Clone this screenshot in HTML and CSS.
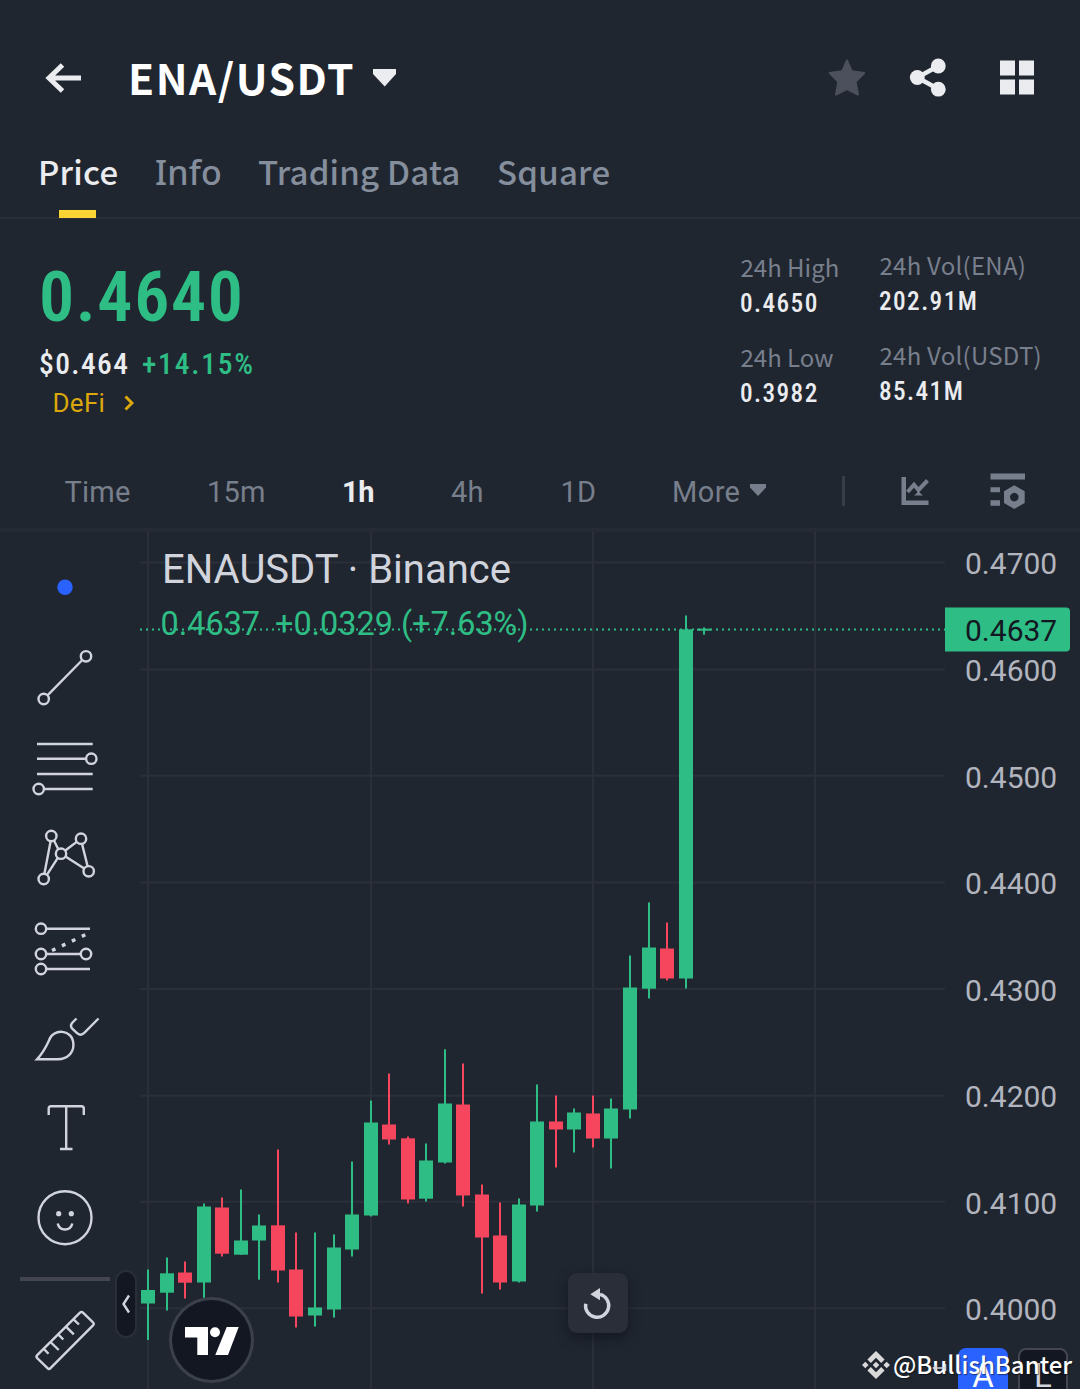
FILE: index.html
```html
<!DOCTYPE html>
<html lang="en">
<head>
<meta charset="utf-8">
<title>ENA/USDT</title>
<link rel="stylesheet" href="styles.css">
</head>
<body>
<header class="titlebar">
  <svg class="back" width="40" height="32" viewBox="0 0 40 32"><path d="M37 16H5M18.500 3 5 16 18.500 29" /></svg>
  <h1 class="pair">ENA/USDT</h1>
  <svg class="pair-caret" width="24" height="20" viewBox="0 0 24 20"><path d="M0 1H23V6L11.700 18.500 0 6Z"/></svg>
  <div class="actions">
    <svg width="38" height="40" viewBox="0 0 38 40"><path class="star" d="M19 2.500 23.800 13.300 36.200 15 27.500 23.800 30 36.500 19 31.200 8 36.500 10.300 23.800 1.700 15 14.200 13.300Z"/></svg>
    <svg width="38" height="40" viewBox="0 0 38 40"><path class="share-line" d="M29.300 8 8.300 19.500 29.300 31"/><circle cx="29.300" cy="8" r="7.400"/><circle cx="8.300" cy="19.500" r="7.400"/><circle cx="29.300" cy="31.200" r="7.400"/></svg>
    <svg width="36" height="40" viewBox="0 0 36 40"><path d="M1 2.500h15v15h-15zM20 2.500h15v15h-15zM1 21.500h15v15h-15zM20 21.500h15v15h-15z"/></svg>
  </div>
</header>
<nav class="tabs">
  <a class="tab active">Price</a>
  <a class="tab info">Info</a>
  <a class="tab data">Trading Data</a>
  <a class="tab square">Square</a>
</nav>
<section class="summary">
  <div class="quote">
    <div class="last">0.4640</div>
    <div class="change"><span class="usd">$0.464</span><span class="pct">+14.15%</span></div>
    <div class="tag">DeFi<svg width="10" height="16" viewBox="0 0 10 16"><path d="M1.500 1.500 8 8 1.500 14.500"/></svg></div>
  </div>
  <div class="stats high-low">
    <div class="stat"><span class="label">24h High</span><span class="value">0.4650</span></div>
    <div class="stat"><span class="label">24h Low</span><span class="value">0.3982</span></div>
  </div>
  <div class="stats volume">
    <div class="stat"><span class="label">24h Vol(ENA)</span><span class="value">202.91M</span></div>
    <div class="stat"><span class="label">24h Vol(USDT)</span><span class="value">85.41M</span></div>
  </div>
</section>
<nav class="intervals">
  <span>Time</span><span>15m</span><span class="on">1h</span><span>4h</span><span>1D</span>
  <span>More<svg class="more-caret" width="16" height="14" viewBox="0 0 16 14"><path d="M0 1H16V4.500L8 13 0 4.500Z"/></svg></span>
  <i class="sep"></i>
  <svg width="30" height="30" viewBox="0 0 30 30"><path d="M.5 1H5V24.500H27.500V29H.500Z"/><path class="zig" d="M6.500 16 13 8.700 17.500 14 26.500 4.500"/><path d="M17 13l2 4 3 2.500h-9l3-2.500z"/></svg>
  <svg width="36" height="36" viewBox="0 0 36 36"><path fill-rule="evenodd" d="M.5.500H35V6.500H.500ZM.5 14.200H10V19.200H.500ZM.5 27.200H10V32.700H.500ZM24.300 12.300 34.700 18.200V30L24.300 35.900 14 30V18.200ZM24.300 19.800a4.300 4.300 0 1 0 .01 0Z"/></svg>
</nav>
<main class="workspace">
  <aside class="tools">
    <svg viewBox="0 0 130 90"><circle class="dot" cx="65" cy="45.300" r="7.700"/></svg>
    <svg viewBox="0 0 130 90"><path d="M47.500 63.300 82.300 28"/><circle cx="86" cy="24.300" r="5.200"/><circle cx="43.700" cy="67" r="5.200"/></svg>
    <svg viewBox="0 0 130 90"><path d="M37 22H92.700M37 36.700H86M37 52H92.700M44 67H92.700"/><circle cx="91.300" cy="36.700" r="5.200"/><circle cx="38.700" cy="67" r="5.200"/></svg>
    <svg viewBox="0 0 130 90"><path d="M50.600 29.300 44.400 61.800M54 28.500 58.300 37.200M57.800 45.800 46.900 62.900M65.300 38.500 76.700 29.900M82 31.800 87.600 54.200M65.500 44.500 84.200 56.600"/><circle cx="51.300" cy="24" r="5.200"/><circle cx="81" cy="26.700" r="5.200"/><circle cx="61" cy="41.700" r="5.200"/><circle cx="88.700" cy="59.300" r="5.200"/><circle cx="43.700" cy="67" r="5.200"/></svg>
    <svg viewBox="0 0 130 90"><path d="M46.200 26.700H90M46.200 52H81M46.200 67H90"/><path class="dots" d="M52 48.500 88 31.500"/><circle cx="41" cy="26.700" r="5.200"/><circle cx="41" cy="52" r="5.200"/><circle cx="86" cy="52" r="5.200"/><circle cx="41" cy="67" r="5.200"/></svg>
    <svg viewBox="0 0 130 90"><path d="M37 67.300C43 61 46 55 49 48.500 52 36.500 73.400 36 73.400 53 73.400 61 67 67.300 58 67.300Z"/><path d="M76.500 26.500 72.500 30.500Q69.500 33.700 72.500 37L76.500 40.700Q80.500 44.700 84.500 40.700L98.500 26.500"/></svg>
    <svg viewBox="0 0 130 90"><path d="M48.700 33V26.500Q48.700 24.200 51 24.200H81.500Q83.800 24.200 83.800 26.500V33M66.200 24.200V67M60 67H72.500"/></svg>
    <svg viewBox="0 0 130 90"><circle cx="65" cy="45.700" r="26.500"/><path d="M57.700 51.500C59.500 59.500 70.500 59.500 72.300 51.500"/><circle class="eye" cx="58.700" cy="41.700" r="2.600"/><circle class="eye" cx="71.300" cy="41.700" r="2.600"/></svg>
    <hr>
    <svg viewBox="0 0 130 90"><path d="M80 16.700Q81.500 15.200 83 16.700L93 26.300Q94.500 27.800 93 29.300L50.500 72.200Q49 73.700 47.500 72.200L37.200 62.200Q35.700 60.700 37.200 59.200ZM43.700 52.700 48.500 57.800M50.500 46 58.700 54M58.200 38.400 63.300 43.500M66 30.700 73.800 38.300M73.500 23.300 79 28.500"/></svg>
    <button class="collapse"><svg width="10" height="20" viewBox="0 0 10 20"><path d="M8 1.500 2.500 10 8 18.500"/></svg></button>
  </aside>
  <div class="chart">
    <svg class="plot" width="940" height="857" viewBox="140 532 940 857">
      <path class="grid" d="M148 528V1389M371 528V1389M593 528V1389M815 528V1389M140 562.500H945M140 669.500H945M140 775.700H945M140 882.500H945M140 989H945M140 1095.700H945M140 1201.700H945M140 1308.300H945"/>
      <path class="last-line" d="M140 629.500H945"/>
      <g id="candles"></g>
      <text class="symbol" x="162" y="582.700">ENAUSDT · Binance</text>
      <text class="delta" x="160.500" y="634.500">0.4637</text>
      <text class="delta" x="275" y="634.500">+0.0329 (+7.63%)</text>
      <path class="badge" d="M945 607.500H1066Q1070 607.500 1070 611.500V647.500Q1070 651.500 1066 651.500H945Z"/>
      <g class="axis">
        <text x="965" y="573.700">0.4700</text>
        <text class="current" x="965" y="640.700">0.4637</text>
        <text x="965" y="680.700">0.4600</text>
        <text x="965" y="787.500">0.4500</text>
        <text x="965" y="893.700">0.4400</text>
        <text x="965" y="1000.500">0.4300</text>
        <text x="965" y="1106.700">0.4200</text>
        <text x="965" y="1213.500">0.4100</text>
        <text x="965" y="1319.700">0.4000</text>
      </g>
    </svg>
    <div class="tv-logo"><svg width="54" height="29" viewBox="0 0 54 29"><path d="M0 0H23V28H12.300V10.400H0Z"/><circle cx="30" cy="5.200" r="5"/><path d="M41.700 0H53.700L43 28H30.300Z"/></svg></div>
    <button class="reset"><svg width="30" height="34" viewBox="0 0 30 34"><path class="arc" d="M2.700 17.700A11.600 11.600 0 1 0 17 8.400"/><path d="M7.300 8.300 17 2V14.300Z"/></svg></button>
    <div class="scale auto">A</div>
    <div class="scale log">L</div>
    <div class="watermark">
      <svg width="28" height="28" viewBox="0 0 28 28"><path d="M14 0 22.600 8.600 19.200 12 14 6.800 8.800 12 5.400 8.600ZM14 28 5.400 19.400 8.800 16 14 21.200 19.200 16 22.600 19.400ZM14 10.700 17.300 14 14 17.300 10.700 14ZM3.300 10.700 6.600 14 3.300 17.300 0 14ZM24.700 10.700 28 14 24.700 17.300 21.400 14Z"/></svg>
      <span>@BullishBanter</span>
      <svg class="swap" width="16" height="12" viewBox="0 0 16 12"><path d="M1 6H14M5 3 1.500 6 5 9M13.500 2V9"/></svg>
    </div>
  </div>
</main>
<script src="chart.js"></script>
</body>
</html>
```
FILE: styles.css
```css
* { box-sizing: border-box; }
body {
  margin: 0;
  height: 1389px;
  overflow: hidden;
  background: #202630;
  color: #eaecef;
  font-family: Roboto, "Liberation Sans", sans-serif;
}
svg { display: block; flex: none; }
button { padding: 0; border: 0; }

.titlebar { display: flex; align-items: center; height: 156px; padding: 0 45px 0 40px; }
.back { margin-left: 4px; fill: none; stroke: #eaecef; stroke-width: 5; }
.pair {
  margin: 0 0 2px 44px;
  width: 245px;
  color: #fff;
  font: 700 42.500px/60px "Noto Sans CJK SC", sans-serif;
  letter-spacing: 1.500px;
}
.pair-caret { fill: #eaecef; }
.actions { display: flex; gap: 43px; margin-left: auto; fill: #eaecef; }
.actions svg:nth-child(2) { margin-right: 9px; }
.star { fill: #4c505c; stroke: #4c505c; stroke-width: 2; stroke-linejoin: round; }
.share-line { fill: none; stroke: #eaecef; stroke-width: 4.500; }

.tabs {
  display: flex;
  align-items: baseline;
  height: 63px;
  padding-left: 38px;
  border-bottom: 2px solid #2a2f39;
  font: 500 33px/30px "Noto Sans CJK SC", sans-serif;
  color: #848e9c;
}
.tab { position: relative; height: 61px; margin-right: 37px; letter-spacing: .2px; white-space: nowrap; }
.tab.active { width: 80px; color: #eaecef; }
.tab.active::after {
  content: "";
  position: absolute;
  left: 21px;
  bottom: -.5px;
  width: 37px;
  height: 7.500px;
  background: #fcd535;
}
.tab.info { width: 66px; font-family: "Noto Sans", sans-serif; font-size: 34px; letter-spacing: .2px; }
.tab.data { width: 202px; }

.summary { display: flex; height: 238px; }
.quote { width: 740px; padding: 43px 0 0 39px; }
.last {
  color: #2ebd85;
  font-size: 70px;
  font-weight: 600;
  font-stretch: 75%;
  line-height: 70px;
  letter-spacing: 1.600px;
}
.change { display: flex; gap: 13px; margin-top: 12px; font-size: 29.500px; font-weight: 500; font-stretch: 75%; line-height: 40px; }
.change .usd { width: 90px; letter-spacing: 1.400px; }
.change .pct { color: #2ebd85; letter-spacing: 1.800px; }
.tag {
  display: flex;
  align-items: center;
  gap: 19px;
  padding-left: 13.500px;
  color: #dba70b;
  font-size: 26px;
  line-height: 38px;
  letter-spacing: .3px;
}
.tag svg { fill: none; stroke: #dba70b; stroke-width: 3; }
.stats { width: 139px; padding-top: 31px; }
.stats.volume { width: 190px; padding-top: 29px; }
.stat { height: 90px; white-space: nowrap; }
.stat .label { display: block; padding-left: .5px; color: #787f8c; font: 400 24px/34px "Noto Sans CJK SC", sans-serif; }
.volume .label { letter-spacing: .250px; }
.stat .value {
  display: block;
  margin-top: 1.500px;
  font-size: 25.300px;
  font-weight: 500;
  font-stretch: 75%;
  line-height: 36px;
  letter-spacing: 1.400px;
}

.intervals {
  display: grid;
  grid-template-columns: 142.500px 135px 109px 109.500px 111.500px 170px 59px 89px auto;
  align-items: center;
  height: 70.500px;
  padding-left: 64.500px;
  color: #787f8c;
  fill: #787f8c;
  font-size: 29px;
  letter-spacing: .2px;
}
.intervals .on { color: #eaecef; font-weight: 700; letter-spacing: -.5px; }
.intervals span:last-of-type { display: flex; align-items: center; gap: 10px; letter-spacing: .4px; }
.more-caret { margin-bottom: 4px; }
.sep { width: 3px; height: 30px; margin-bottom: 2px; background: #383d48; }
.intervals > svg { margin-bottom: 3px; }
.zig { fill: none; stroke: #787f8c; stroke-width: 4; }

.workspace { display: flex; height: 862px; border-top: 4.500px solid #252a34; }
.tools { position: relative; width: 140px; height: 857px; padding-top: 10px; }
.tools > svg {
  width: 130px;
  height: 90px;
  fill: none;
  stroke: #d1d4dc;
  stroke-width: 2.400;
}
.tools .dot { fill: #2962ff; stroke: none; }
.tools .eye { fill: #d1d4dc; stroke: none; }
.tools .dots { stroke-width: 3.500; stroke-dasharray: 3.800 7.200; }
.tools hr { width: 90px; height: 3.500px; margin: 15.500px 0 15px 20px; border: 0; background: #434651; }
.collapse {
  position: absolute;
  left: 115px;
  top: 738px;
  display: grid;
  place-items: center;
  width: 22px;
  height: 68px;
  border: 2.500px solid #2a2e39;
  border-radius: 11px;
  background: #131722;
}
.collapse svg { fill: none; stroke: #d1d4dc; stroke-width: 2.400; }

.chart { position: relative; width: 940px; height: 857px; overflow: hidden; }
.grid { fill: none; stroke: #2a2f3a; stroke-width: 2; }
.last-line { fill: none; stroke: #2ebd85; stroke-width: 2; stroke-dasharray: 2 4; }
.up { fill: #2ebd85; }
.down { fill: #f6465d; }
.symbol { fill: #d1d4dc; font-size: 40px; }
.delta { fill: #2ebd85; font-size: 32.400px; }
.badge { fill: #2ebd85; }
.axis { fill: #b2b5be; font-size: 30px; }
.axis .current { fill: #131722; }
.tv-logo {
  position: absolute;
  left: 29px;
  top: 765px;
  display: grid;
  place-items: center;
  width: 85px;
  height: 86px;
  border: 3px solid #3c404b;
  border-radius: 50%;
  background: #131722;
  fill: #fff;
}
.tv-logo svg { margin-top: 3px; }
.reset {
  position: absolute;
  left: 428px;
  top: 741px;
  display: grid;
  place-items: center;
  width: 60px;
  height: 60px;
  border-radius: 9px;
  background: #2a2e39;
  box-shadow: 0 5px 12px rgba(10, 13, 20, .55);
  fill: #d1d4dc;
}
.reset .arc { fill: none; stroke: #d1d4dc; stroke-width: 3.400; }
.scale {
  position: absolute;
  top: 816px;
  width: 50px;
  height: 60px;
  border-radius: 8px;
  color: #fff;
  font-size: 33px;
  line-height: 56px;
  text-align: center;
}
.scale.auto { left: 818px; background: #2962ff; }
.scale.log { left: 878px; line-height: 51px; border: 2.500px solid #434651; background: #131722; color: #d1d4dc; }
.watermark {
  position: absolute;
  left: 722px;
  top: 815px;
  display: flex;
  align-items: center;
  gap: 3px;
  height: 36px;
  color: #fff;
  fill: #d9d9d9;
  font: 500 24px/34px "Noto Sans CJK SC", sans-serif;
  text-shadow: 1px 1px 1px rgba(0, 0, 0, .5);
}
.watermark span { margin-bottom: 2px; }
.swap { position: absolute; left: 70px; top: 15px; fill: none; stroke: #d1d4dc; stroke-width: 1.500; }
```
FILE: chart.js
```js
// Each candle: [direction, left edge, body top, body bottom, wick top, wick bottom]
const candles = [
  ["up", 141, 1290, 1303.5, 1269.5, 1340],
  ["up", 160, 1273.3, 1292.7, 1257.5, 1310.5],
  ["down", 178, 1272.5, 1282.7, 1261.5, 1298.5],
  ["up", 197, 1206.5, 1282.5, 1203.5, 1300],
  ["down", 215, 1207.5, 1253.7, 1197.5, 1256.5],
  ["up", 234, 1240.5, 1254.7, 1189.5, 1254.7],
  ["up", 252, 1225.5, 1240.5, 1214.5, 1279.7],
  ["down", 271, 1225.3, 1270.5, 1149.5, 1282.5],
  ["down", 289, 1269.5, 1316.5, 1232.5, 1327.5],
  ["up", 308, 1307.5, 1315.5, 1232.5, 1326.5],
  ["up", 327, 1247.5, 1309.5, 1234.5, 1317.5],
  ["up", 345, 1214.5, 1249.5, 1161.5, 1256.5],
  ["up", 364, 1122.5, 1215.5, 1100.5, 1216.5],
  ["down", 382, 1124.5, 1139.5, 1073.5, 1144.5],
  ["down", 401, 1138.3, 1199.5, 1136.5, 1203.5],
  ["up", 419, 1160.5, 1198.7, 1143.5, 1201.5],
  ["up", 438, 1103.5, 1162.5, 1049.3, 1163.5],
  ["down", 456, 1104.5, 1195.5, 1063.5, 1206.5],
  ["down", 475, 1194.5, 1237.5, 1184.5, 1293.5],
  ["down", 493, 1235.5, 1282.5, 1202.5, 1289.5],
  ["up", 512, 1204.5, 1281.5, 1198.5, 1282.5],
  ["up", 530, 1121.5, 1205.5, 1084.5, 1211.5],
  ["down", 549, 1121.5, 1129.5, 1095.5, 1167.5],
  ["up", 567, 1112.5, 1129.5, 1108.5, 1152.5],
  ["down", 586, 1113.5, 1138.5, 1095.5, 1147.5],
  ["up", 604, 1108.5, 1138.5, 1098.5, 1168.5],
  ["up", 623, 987.5, 1109.5, 955.5, 1118.5],
  ["up", 642, 947.5, 988.7, 902.5, 998.5],
  ["down", 660, 948.5, 978.5, 922.5, 980.5],
  ["up", 679, 629.3, 978.5, 615.5, 988.5],
  ["up", 697, 628.7, 630.7, 627.5, 634.7],
];

const layer = document.getElementById("candles");

function bar(direction, x, width, top, bottom) {
  const rect = document.createElementNS("http://www.w3.org/2000/svg", "rect");
  rect.setAttribute("class", direction);
  rect.setAttribute("x", x);
  rect.setAttribute("y", top);
  rect.setAttribute("width", width);
  rect.setAttribute("height", bottom - top);
  layer.appendChild(rect);
}

for (const [direction, x, bodyTop, bodyBottom, wickTop, wickBottom] of candles) {
  bar(direction, x + 6, 2, wickTop, wickBottom);
  bar(direction, x, 14, bodyTop, bodyBottom);
}
```
